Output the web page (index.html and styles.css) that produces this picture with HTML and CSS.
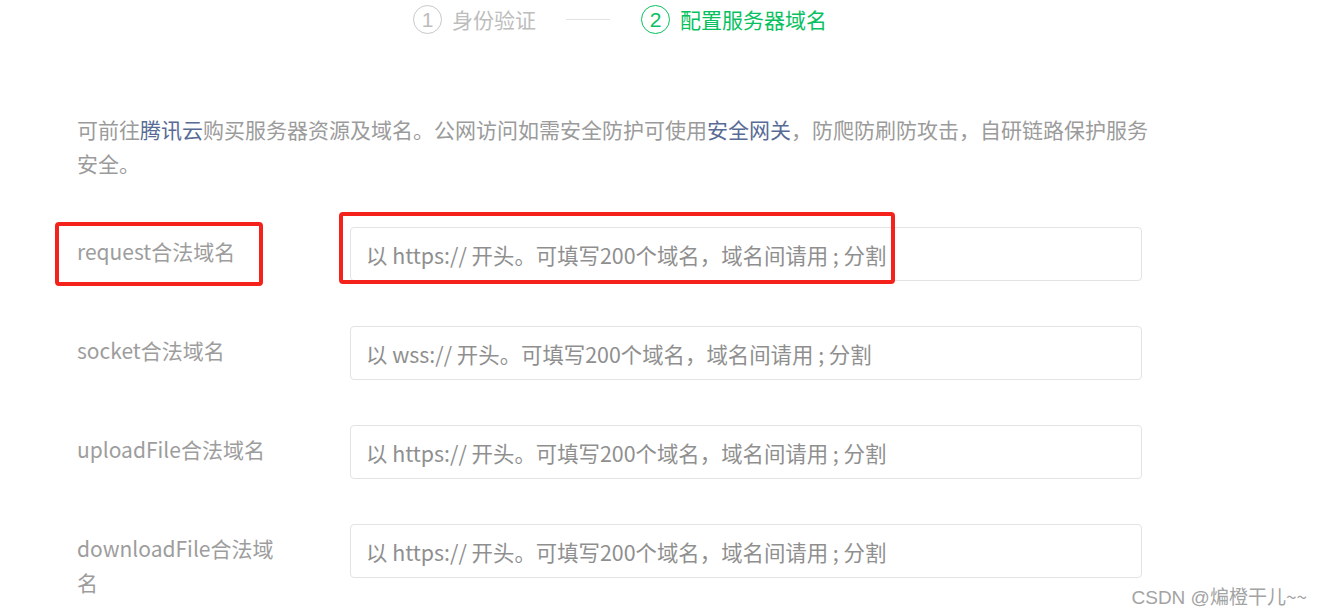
FILE: index.html
```html
<!DOCTYPE html>
<html lang="zh-CN">
<head>
<meta charset="utf-8">
<title>配置服务器域名</title>
<link rel="stylesheet" href="styles.css">
</head>
<body>
<div class="page">
  <div class="steps">
    <div class="step">
      <span class="step-num">1</span>
      <span class="step-text">身份验证</span>
    </div>
    <span class="step-line"></span>
    <div class="step active">
      <span class="step-num">2</span>
      <span class="step-text">配置服务器域名</span>
    </div>
  </div>

  <p class="desc">可前往<a class="link">腾讯云</a>购买服务器资源及域名。公网访问如需安全防护可使用<a class="link">安全网关</a>，防爬防刷防攻击，自研链路保护服务安全。</p>

  <div class="form">
    <div class="row">
      <label class="label">request合法域名</label>
      <div class="input">以 https:// 开头。可填写200个域名，域名间请用 ; 分割</div>
    </div>
    <div class="row">
      <label class="label">socket合法域名</label>
      <div class="input">以 wss:// 开头。可填写200个域名，域名间请用 ; 分割</div>
    </div>
    <div class="row">
      <label class="label">uploadFile合法域名</label>
      <div class="input">以 https:// 开头。可填写200个域名，域名间请用 ; 分割</div>
    </div>
    <div class="row">
      <label class="label">downloadFile合法域名</label>
      <div class="input">以 https:// 开头。可填写200个域名，域名间请用 ; 分割</div>
    </div>
  </div>

  <div class="mark mark-label"></div>
  <div class="mark mark-input"></div>
  <div class="watermark"><span class="wm-latin">CSDN @</span>煸橙干儿~~</div>
</div>
</body>
</html>
```

FILE: styles.css
```css
html, body {
  margin: 0;
  padding: 0;
  background: #fff;
}
body {
  font-family: "Noto Sans CJK SC", "Noto Sans", sans-serif;
  color: #999;
}
.page {
  position: relative;
  width: 1321px;
  height: 615px;
  overflow: hidden;
}
.steps {
  display: flex;
  align-items: center;
  padding-left: 413px;
  padding-top: 5px;
  height: 29px;
}
.step {
  display: flex;
  align-items: center;
  gap: 10px;
  color: #bdbdbd;
}
.step-num {
  box-sizing: border-box;
  width: 29px;
  height: 29px;
  border: 1.5px solid #c8c8c8;
  border-radius: 50%;
  display: flex;
  align-items: center;
  justify-content: center;
  font-family: "Liberation Sans", sans-serif;
  font-size: 21px;
  line-height: 1;
}
.step-text {
  font-size: 21px;
  line-height: 29px;
}
.step-line {
  width: 44px;
  height: 1px;
  background: #e2e2e2;
  margin: 0 31px 0 30px;
}
.step.active {
  color: #07c160;
}
.step.active .step-num {
  border-color: #07c160;
}
.desc {
  margin: 78px 0 0 77px;
  width: 1078px;
  font-size: 21px;
  line-height: 34px;
  color: #9b9b9b;
}
.link {
  color: #576b95;
  text-decoration: none;
}
.form {
  margin-top: 47px;
  padding-left: 77px;
  display: flex;
  flex-direction: column;
  gap: 45px;
}
.row {
  display: flex;
  align-items: flex-start;
}
.label {
  width: 214px;
  margin-right: 59px;
  padding-top: 7px;
  font-size: 21px;
  line-height: 34px;
  color: #9d9d9d;
  word-break: break-all;
}
.input {
  box-sizing: border-box;
  width: 792px;
  height: 54px;
  border: 1px solid #e3e3e3;
  border-radius: 4px;
  padding-left: 15px;
  display: flex;
  align-items: center;
  font-size: 21.4px;
  color: #8f8f8f;
}
.mark {
  position: absolute;
  box-sizing: border-box;
  border: 4px solid #f5221b;
  border-radius: 4px;
}
.mark-label {
  left: 55px;
  top: 222px;
  width: 208px;
  height: 64px;
}
.mark-input {
  left: 339px;
  top: 212px;
  width: 556px;
  height: 72px;
}
.watermark {
  position: absolute;
  right: 14px;
  bottom: 6px;
  font-size: 19px;
  color: #a3a3a3;
  font-family: "Noto Sans CJK SC", "Liberation Sans", sans-serif;
  text-shadow: 0 0 1px #fff;
}
.wm-latin {
  font-family: "Liberation Sans", sans-serif;
}
```
